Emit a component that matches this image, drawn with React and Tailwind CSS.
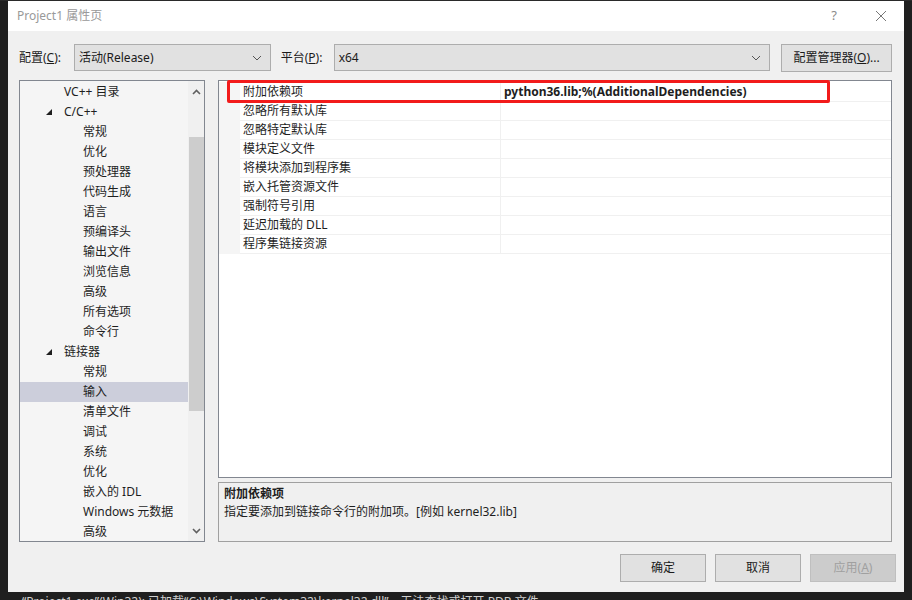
import React from "react";

const F = { fontFamily: '"Noto Sans", "Noto Sans CJK SC", sans-serif' };

const tree = [
  { t: "VC++ 目录", l: 1 },
  { t: "C/C++", l: 1, open: true },
  { t: "常规", l: 2 },
  { t: "优化", l: 2 },
  { t: "预处理器", l: 2 },
  { t: "代码生成", l: 2 },
  { t: "语言", l: 2 },
  { t: "预编译头", l: 2 },
  { t: "输出文件", l: 2 },
  { t: "浏览信息", l: 2 },
  { t: "高级", l: 2 },
  { t: "所有选项", l: 2 },
  { t: "命令行", l: 2 },
  { t: "链接器", l: 1, open: true },
  { t: "常规", l: 2 },
  { t: "输入", l: 2, sel: true },
  { t: "清单文件", l: 2 },
  { t: "调试", l: 2 },
  { t: "系统", l: 2 },
  { t: "优化", l: 2 },
  { t: "嵌入的 IDL", l: 2 },
  { t: "Windows 元数据", l: 2 },
  { t: "高级", l: 2 },
];

const props = [
  ["附加依赖项", "python36.lib;%(AdditionalDependencies)"],
  ["忽略所有默认库", ""],
  ["忽略特定默认库", ""],
  ["模块定义文件", ""],
  ["将模块添加到程序集", ""],
  ["嵌入托管资源文件", ""],
  ["强制符号引用", ""],
  ["延迟加载的 DLL", ""],
  ["程序集链接资源", ""],
];

function Chevron({ up }) {
  return (
    <svg width="9" height="6" viewBox="0 0 9 6">
      <path
        d={up ? "M1 5 L4.5 1.5 L8 5" : "M1 1 L4.5 4.5 L8 1"}
        fill="none"
        stroke="#606060"
        strokeWidth="1.6"
      />
    </svg>
  );
}

function Combo({ text, w }) {
  return (
    <div
      className={`h-[27px] ${w} bg-[#e1e1e1] border border-[#adadad] flex items-center justify-between pl-[4px] pr-[8px] text-[12px] text-[#1b1b1b]`}
    >
      <span>{text}</span>
      <svg width="10" height="6" viewBox="0 0 10 6">
        <path d="M1 1 L5 5 L9 1" fill="none" stroke="#555" strokeWidth="1" />
      </svg>
    </div>
  );
}

export default function App() {
  return (
    <div className="w-[912px] h-[600px] bg-[#1f1f1f] overflow-hidden flex flex-col" style={F}>
      <div className="h-[1px] bg-[#2a2a2a] shrink-0" />
      <div className="ml-[8px] w-[896px] h-[591px] shrink-0 bg-[#f0f0f0] flex flex-col">
        {/* title bar */}
        <div className="h-[30px] bg-white flex items-center shrink-0">
          <span className="ml-[9px] text-[12px] text-[#999999]">Project1 属性页</span>
          <span className="ml-auto mr-[38px] text-[13px] text-[#8a8a8a]">?</span>
          <svg width="12" height="12" viewBox="0 0 12 12" className="mr-[17px]">
            <path d="M1 1 L11 11 M11 1 L1 11" stroke="#777" strokeWidth="1" />
          </svg>
        </div>
        {/* body */}
        <div className="flex-1 flex flex-col pl-[11px] pr-[12px] pt-[13px]">
          <div className="flex items-center h-[27px] text-[12px] text-[#1b1b1b]">
            <span className="w-[55px]">
              配置(<span className="underline">C</span>):
            </span>
            <Combo text="活动(Release)" w="w-[197px]" />
            <span className="ml-[10px] w-[53px]">
              平台(<span className="underline">P</span>):
            </span>
            <Combo text="x64" w="w-[437px]" />
            <div className="ml-[11px] h-[28px] w-[111px] bg-[#e1e1e1] border border-[#adadad] flex items-center justify-center">
              配置管理器(<span className="underline">O</span>)...
            </div>
          </div>

          <div className="flex mt-[9px] h-[462px]">
            {/* tree */}
            <div className="w-[186px] h-full border border-[#828790] bg-[#f5f5f5] flex overflow-hidden">
              <div className="flex-1 pt-[1px] overflow-hidden">
                {tree.map((it, i) => (
                  <div
                    key={i}
                    className={`h-[20px] flex items-center text-[12px] text-[#1e1e1e] whitespace-nowrap ${
                      it.sel ? "bg-[#cccedb]" : ""
                    }`}
                  >
                    <div className={it.l === 1 ? "w-[44px] flex justify-end pr-[12px]" : "w-[63px]"}>
                      {it.open && (
                        <svg width="6" height="6" viewBox="0 0 6 6">
                          <path d="M6 0 L6 6 L0 6 Z" fill="#1e1e1e" />
                        </svg>
                      )}
                    </div>
                    <span>{it.t}</span>
                  </div>
                ))}
              </div>
              <div className="w-[16px] h-full bg-[#f0f0f0] flex flex-col items-center">
                <div className="h-[19px] flex items-center justify-center mt-[1px]">
                  <Chevron up />
                </div>
                <div className="w-[15px] h-[274px] bg-[#cdcdcd] mt-[36px]" />
                <div className="flex-1" />
                <div className="h-[19px] flex items-center justify-center mb-[1px]">
                  <Chevron />
                </div>
              </div>
            </div>

            {/* right */}
            <div className="ml-[13px] flex-1 flex flex-col">
              <div className="relative h-[399px] border border-[#828790] bg-white flex flex-col pt-[1px]">
                {props.map(([k, v], i) => (
                  <div key={i} className={`${i === 0 ? "h-[20px]" : "h-[19px]"} flex text-[12px] text-[#1e1e1e]`}>
                    <div className="w-[21px] bg-[#f5f5f5]" />
                    <div className="w-[261px] pl-[3px] flex items-center border-r border-b border-[#f0f0f0] whitespace-nowrap">
                      {k}
                    </div>
                    <div className="flex-1 pl-[3px] flex items-center font-bold whitespace-nowrap border-b border-[#f0f0f0]">
                      {v}
                    </div>
                  </div>
                ))}
                <div className="absolute left-[8px] top-[-1px] w-[603px] h-[23px] border-[3px] border-[#f21b1b] rounded-[2px]" />
              </div>
              <div className="mt-[4px] h-[60px] border border-[#a0a0a0] bg-[#f0f0f0] px-[5px] pt-[2px] text-[12px] text-[#1e1e1e] leading-[18px]">
                <div className="font-bold">附加依赖项</div>
                <div>指定要添加到链接命令行的附加项。[例如 kernel32.lib]</div>
              </div>
            </div>
          </div>

          {/* buttons */}
          <div className="flex justify-end mt-[12px] mr-[-4px] gap-[9px] text-[12px]">
            <div className="w-[86px] h-[28px] bg-[#e1e1e1] border border-[#adadad] flex items-center justify-center text-[#1b1b1b]">
              确定
            </div>
            <div className="w-[86px] h-[28px] bg-[#e1e1e1] border border-[#adadad] flex items-center justify-center text-[#1b1b1b]">
              取消
            </div>
            <div className="w-[86px] h-[28px] bg-[#cccccc] border border-[#bfbfbf] flex items-center justify-center text-[#a0a0a0]">
              应用(<span className="underline">A</span>)
            </div>
          </div>
        </div>
      </div>
      <div className="h-[8px] overflow-hidden relative">
        <div className="absolute left-[22px] top-[3px] text-[12px] text-[#d0d0d0] whitespace-nowrap leading-[14px]">
          “Project1.exe”(Win32): 已加载“C:\Windows\System32\kernel32.dll”。无法查找或打开 PDB 文件。
        </div>
      </div>
    </div>
  );
}
